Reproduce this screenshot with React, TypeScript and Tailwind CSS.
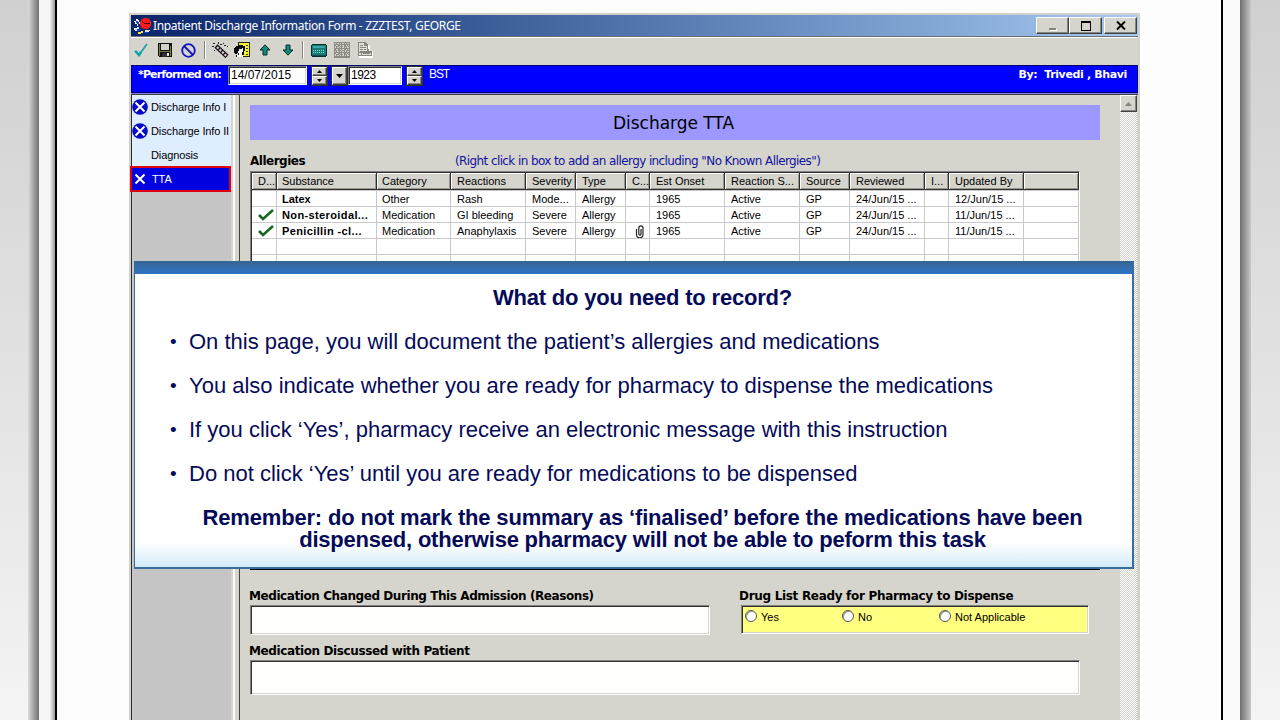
import React from 'react';
import clsx from 'clsx';

interface Column {
  label: string;
  width: string;
  pad: string;
}

interface AllergyRow {
  checked: boolean;
  clip: boolean;
  cells: string[];
}

const columns: Column[] = [
  { label: 'D...', width: 'w-[25px]', pad: 'pl-[6px]' },
  { label: 'Substance', width: 'w-[100px]', pad: 'pl-[5px]' },
  { label: 'Category', width: 'w-[74px]', pad: 'pl-[5px]' },
  { label: 'Reactions', width: 'w-[75px]', pad: 'pl-[6px]' },
  { label: 'Severity', width: 'w-[50px]', pad: 'pl-[6px]' },
  { label: 'Type', width: 'w-[50px]', pad: 'pl-[6px]' },
  { label: 'C...', width: 'w-[24px]', pad: 'pl-[6px]' },
  { label: 'Est Onset', width: 'w-[75px]', pad: 'pl-[6px]' },
  { label: 'Reaction S...', width: 'w-[75px]', pad: 'pl-[6px]' },
  { label: 'Source', width: 'w-[50px]', pad: 'pl-[6px]' },
  { label: 'Reviewed', width: 'w-[75px]', pad: 'pl-[6px]' },
  { label: 'I...', width: 'w-[24px]', pad: 'pl-[6px]' },
  { label: 'Updated By', width: 'w-[75px]', pad: 'pl-[6px]' },
  { label: '', width: 'w-[55px]', pad: '' },
];

const rows: AllergyRow[] = [
  { checked: false, clip: false, cells: ['', 'Latex', 'Other', 'Rash', 'Mode...', 'Allergy', '', '1965', 'Active', 'GP', '24/Jun/15 ...', '', '12/Jun/15 ...', ''] },
  { checked: true, clip: false, cells: ['', 'Non-steroidal...', 'Medication', 'GI bleeding', 'Severe', 'Allergy', '', '1965', 'Active', 'GP', '24/Jun/15 ...', '', '11/Jun/15 ...', ''] },
  { checked: true, clip: true, cells: ['', 'Penicillin -cl...', 'Medication', 'Anaphylaxis', 'Severe', 'Allergy', '', '1965', 'Active', 'GP', '24/Jun/15 ...', '', '11/Jun/15 ...', ''] },
  { checked: false, clip: false, cells: Array(14).fill('') },
  { checked: false, clip: false, cells: Array(14).fill('') },
];

const bullets = [
  'On this page, you will document the patient’s allergies and medications',
  'You also indicate whether you are ready for pharmacy to dispense the medications',
  'If you click ‘Yes’, pharmacy receive an electronic message with this instruction',
  'Do not click ‘Yes’ until you are ready for medications to be dispensed',
];

const raised = 'bg-[#d6d5cd] border border-t-white border-l-white border-r-[#404040] border-b-[#404040] shadow-[inset_-1px_-1px_0_#86867f]';
const sunken = 'border border-t-[#808080] border-l-[#808080] border-r-white border-b-white shadow-[inset_1px_1px_0_#303030,inset_-1px_-1px_0_#d6d5cd]';

const AppIcon = () => (
  <svg width="20" height="20" viewBox="0 0 20 20" shapeRendering="crispEdges">
    <path d="M3 3h2v1h1v2h1v2H5v2H4V8H2V6H1V5h2z" fill="#f4f4f4" />
    <path d="M3 5h2v1h1v2H4V7H3z" fill="#1540d8" />
    <path d="M1 12h3v-1h2v2H4v2H2v-1H1z" fill="#d8e4ff" />
    <path d="M4 13h3v2H4z" fill="#1540d8" />
    <path d="M5 16h3v-1h2v2H8v1H5z" fill="#f0e24a" />
    <circle cx="12.500" cy="7.500" r="5.700" fill="#ee1c1c" shapeRendering="auto" />
    <path d="M9 5l3 3 5-1" stroke="#5a0000" fill="none" />
    <path d="M12 14h5v1h-1v1h-4z" fill="#dcdcdc" />
    <path d="M11 16h4v1h-4z" fill="#1540d8" />
  </svg>
);

const TickIcon = () => (
  <svg width="14" height="14" viewBox="0 0 14 14">
    <path d="M1 8l4 4L13 1" stroke="#0aa3a6" strokeWidth="1.6" fill="none" />
    <path d="M1.500 8l3.500 4 2-3" stroke="#0aa3a6" strokeWidth="2.400" fill="none" />
  </svg>
);

const SaveIcon = () => (
  <svg width="14" height="14" viewBox="0 0 14 14" shapeRendering="crispEdges">
    <path d="M0 0h14v14H1l-1-1z" fill="#101010" />
    <path d="M1 1h1v12H1z" fill="#7d7d45" />
    <path d="M12 3h1v10h-1z" fill="#7d7d45" />
    <path d="M3 1h8v6H3z" fill="#d2d2ca" />
    <path d="M2 8h10v1H2z" fill="#7d7d45" />
    <path d="M4 10h5v4H4z" fill="#303030" />
    <path d="M9 10h2v3H9z" fill="#e6e6e0" />
  </svg>
);

const CancelIcon = () => (
  <svg width="15" height="15" viewBox="0 0 15 15">
    <circle cx="7.500" cy="7.500" r="6.300" stroke="#1212c4" strokeWidth="1.800" fill="none" />
    <path d="M3 3l9 9" stroke="#1212c4" strokeWidth="1.800" />
  </svg>
);

const WandIcon = () => (
  <svg width="17" height="16" viewBox="0 0 17 16">
    <path d="M4 4l11 10.500" stroke="#151515" strokeWidth="4.500" />
    <path d="M5 5l9.500 9" stroke="#e2c0d6" strokeWidth="2.200" strokeDasharray="2.200 1.300" />
    <path
      d="M1 1h2v1H1zM0 4h2v1H0zM6 0h1v2H6zM8 2h2v1H8zM11 1h1v1h-1zM12 3h2v1h-2zM15 4h1v1h-1zM2 8h1v1H2z"
      fill="#222"
      shapeRendering="crispEdges"
    />
  </svg>
);

const PersonIcon = () => (
  <svg width="16" height="16" viewBox="0 0 16 16" shapeRendering="crispEdges">
    <path d="M4 0h12v15H4z" fill="#222" />
    <path d="M5 1h10v13H5z" fill="#f7ef2c" />
    <path d="M12 3h2v1h-2zM12 6h2v1h-2zM12 9h2v1h-2zM12 12h2v1h-2z" fill="#333" />
    <path d="M1 5h1V4h2V3h5v1h2v5h-1v2H9v2H5v-2H3v1H1v-1H0V6h1z" fill="#080808" />
    <path d="M5 7h3V6h1v4H8v3h1v2H3v-2h2v-2H4V9h1z" fill="#f2f2f2" />
    <path d="M2 13h1v2H2zM9 10h1v3H9z" fill="#111" />
  </svg>
);

const ArrowIcon = ({ down }: { down?: boolean }) => (
  <svg width="12" height="12" viewBox="0 0 12 12" className={down ? 'rotate-180' : ''}>
    <path d="M6 .8L11 6H8v5H4V6H1z" fill="#0d8a78" stroke="#0b2b28" strokeWidth="1" />
  </svg>
);

const CalcIcon = () => (
  <svg width="16" height="13" viewBox="0 0 16 13" shapeRendering="crispEdges">
    <path d="M1 0h14v1h1v11h-1v1H1v-1H0V1h1z" fill="#0c2b2c" />
    <path d="M1 1h14v10H1z" fill="#157a78" />
    <path d="M2 2h12v2H2z" fill="#39aaa5" />
    <path d="M2 6.500h12M2 8.500h12" stroke="#8fe0d8" strokeDasharray="1 1" />
    <path d="M1 11h14v1H1z" fill="#134e50" />
  </svg>
);

const GridIcon = () => (
  <svg width="16" height="16" viewBox="0 0 16 16" shapeRendering="crispEdges">
    <path d="M0 0h16v16H0z" fill="#8b8b84" />
    <path d="M1 1.500h14M1 5.500h14M1 9.500h14M1 13.500h14" stroke="#d3d3cc" strokeDasharray="1 1 2 1" />
    <path d="M2 3.500h13M2 7.500h13M2 11.500h13" stroke="#d3d3cc" strokeDasharray="2 2 1 1" />
    <path d="M1 4.500h13M3 8.500h12M1 12.500h13" stroke="#d3d3cc" strokeDasharray="1 3" />
  </svg>
);

const DocIcon = () => (
  <svg width="16" height="16" viewBox="0 0 16 16" shapeRendering="crispEdges">
    <path d="M2 1h8l3 4v4h3v7H2z" fill="#fff" />
    <path d="M1 0h7l3 3v4h1v2h3v5H1z" fill="#85857e" />
    <path d="M2 1h5v3h3v5H5v1H2z" fill="#e0e0da" />
    <path d="M5 11h9v2H5zM2 11h2v2H2z" fill="#e0e0da" />
    <path d="M3 3h3v1H3zM3 5h6v1H3zM3 7h3v1H3zM7 7h2v1H7zM3 9h2v1H3zM6 11h7v1H6z" fill="#85857e" />
  </svg>
);

const CrossIcon = ({ disc }: { disc?: boolean }) => (
  <svg width="16" height="16" viewBox="0 0 16 16">
    {disc && <circle cx="8" cy="8" r="7.800" fill="#0808c8" />}
    <path d="M3.500 3.500l9 9M12.500 3.500l-9 9" stroke="#fff" strokeWidth="2" />
  </svg>
);

const GreenCheck = () => (
  <svg width="16" height="12" viewBox="0 0 16 12">
    <path d="M1 6l4 4L15 1" stroke="#17691f" strokeWidth="2.600" fill="none" />
  </svg>
);

const ClipIcon = () => (
  <svg width="10" height="13" viewBox="0 0 10 13">
    <path d="M1.500 4v5.500a3 3 0 0 0 6.500 0V3a2 2 0 0 0-4.200 0v6a1 1 0 0 0 2.200 0V4" stroke="#222" strokeWidth="1.200" fill="none" />
  </svg>
);

const Spinner = () => (
  <div className="flex h-5 w-[17px] flex-col bg-[#303030] p-px">
    {[false, true].map((down) => (
      <div key={String(down)} className={clsx('flex flex-1 items-center justify-center', raised)}>
        <svg width="5" height="3" viewBox="0 0 5 3" className={down ? 'rotate-180' : ''}>
          <path d="M2.500 0L5 3H0z" fill="#000" />
        </svg>
      </div>
    ))}
  </div>
);

const TitleBar = () => (
  <div className="flex h-[21px] shrink-0 items-center bg-linear-to-r from-[#0a246a] to-[#a6caf0] pr-px pl-[2px]">
    <AppIcon />
    <span className="font-['Noto_Sans'] text-[12px] leading-[16px] tracking-[-0.33px] whitespace-nowrap text-white">
      Inpatient Discharge Information Form - ZZZTEST, GEORGE
    </span>
    <div className="ml-auto flex">
      <div className={clsx('flex h-[17px] w-[33px] items-end justify-center pb-[3px]', raised)}>
        <div className="h-[2px] w-[7px] bg-[#85857e] shadow-[1px_1px_0_#fff]" />
      </div>
      <div className={clsx('flex h-[17px] w-[33px] items-center justify-center', raised)}>
        <div className="h-[10px] w-[10px] border border-t-2 border-black" />
      </div>
      <div className={clsx('ml-[2px] flex h-[17px] w-[33px] items-center justify-center', raised)}>
        <svg width="10" height="9" viewBox="0 0 10 9">
          <path d="M1 .5l8 8M9 .5l-8 8" stroke="#000" strokeWidth="2" />
        </svg>
      </div>
    </div>
  </div>
);

const Toolbar = () => (
  <div className="flex h-[27px] shrink-0 items-center bg-[#d6d5cd] pb-[3px] pl-[3px]">
    <TickIcon />
    <div className="ml-[10px]"><SaveIcon /></div>
    <div className="ml-[9px]"><CancelIcon /></div>
    <div className="ml-[8px] h-[18px] w-[2px] border-r border-l border-r-white border-l-[#85857e]" />
    <div className="ml-[6px]"><WandIcon /></div>
    <div className="ml-[5px]"><PersonIcon /></div>
    <div className="ml-[9px]"><ArrowIcon /></div>
    <div className="ml-[11px]"><ArrowIcon down /></div>
    <div className="ml-[8px] h-[18px] w-[2px] border-r border-l border-r-white border-l-[#85857e]" />
    <div className="ml-[7px]"><CalcIcon /></div>
    <div className="ml-[7px]"><GridIcon /></div>
    <div className="ml-[7px]"><DocIcon /></div>
  </div>
);

const PerformedBar = () => (
  <div className="flex h-[28px] shrink-0 items-start border border-[#000070] bg-[#0000ff] text-white">
    <span className="ml-[6px] w-[90px] pt-[2px] font-['DejaVu_Sans'] text-[11px] leading-[14px] font-bold tracking-[-0.85px] whitespace-nowrap">
      *Performed on:
    </span>
    <div className={clsx('h-[19px] w-[79px] bg-white pl-[2px] text-[12px] leading-[17px] text-black', sunken)}>14/07/2015</div>
    <div className="ml-[4px]"><Spinner /></div>
    <div className="ml-[3px] h-5 w-[17px] bg-[#303030] p-px">
      <div className={clsx('flex h-full items-center justify-center', raised)}>
        <svg width="7" height="4" viewBox="0 0 7 4"><path d="M0 0h7L3.500 4z" fill="#000" /></svg>
      </div>
    </div>
    <div className={clsx('h-[19px] w-[54px] bg-white pl-[2px] text-[12px] leading-[17px] tracking-[-0.5px] text-black', sunken)}>1923</div>
    <div className="ml-[4px]"><Spinner /></div>
    <span className="ml-[6px] pt-px text-[12px] leading-[15px] tracking-[-1.1px]">BST</span>
    <span className="mr-[10px] ml-auto pt-[2px] font-['DejaVu_Sans'] text-[11px] leading-[14px] font-bold tracking-[-0.36px] whitespace-pre">
      By:  Trivedi , Bhavi
    </span>
  </div>
);

const Sidebar = () => (
  <div className="w-[100px] shrink-0 border-l border-[#303030] bg-[#c5c5c5] text-[11px] tracking-[-0.12px]">
    <div className="bg-[#dfeeff]">
      {['Discharge Info I', 'Discharge Info II', 'Diagnosis'].map((item, i) => (
        <div key={item} className="flex h-6 items-center">
          <div className="w-[19px] shrink-0">{i < 2 && <CrossIcon disc />}</div>
          <span className="whitespace-nowrap">{item}</span>
        </div>
      ))}
    </div>
    <div className="-mt-px -ml-[2px] flex h-[26px] w-[101px] items-center border-2 border-[#e00010] bg-[#0000e0] text-white">
      <CrossIcon />
      <span className="ml-[4px]">TTA</span>
    </div>
  </div>
);

const AllergyTable = () => (
  <div className={clsx('h-[120px] w-[830px] overflow-hidden bg-white pt-px pl-px text-[11px]', sunken)}>
    <div className="flex h-[17px] border-b border-[#303030] bg-[#d6d5cd] leading-[17px]">
      {columns.map((col, i) => (
        <div key={i} className={clsx('shrink-0 overflow-hidden border-r border-r-[#303030] whitespace-nowrap shadow-[inset_1px_1px_0_#fff,inset_-1px_-1px_0_#98988f]', col.width, col.pad)}>
          {col.label}
        </div>
      ))}
    </div>
    <div className="h-px border-b border-[#c9c9c9]" />
    {rows.map((row, r) => (
      <div key={r} className="flex h-4 border-b border-[#c9c9c9] leading-[15px]">
        {row.cells.map((cell, i) => (
          <div
            key={i}
            className={clsx('flex shrink-0 items-center border-r border-[#c9c9c9] pt-px whitespace-nowrap', columns[i].width, columns[i].pad, i === 1 && 'font-bold', i === 1 && r > 0 && 'tracking-[0.38px]')}
          >
            {i === 0 && row.checked && <GreenCheck />}
            {i === 6 && row.clip ? <div className="ml-[3px]"><ClipIcon /></div> : cell}
          </div>
        ))}
      </div>
    ))}
  </div>
);

const labelFont = "font-['DejaVu_Sans'] text-[12px] font-bold leading-[18px] whitespace-nowrap text-black";

const FormBody = () => (
  <div className="flex w-[880px] shrink-0 flex-col bg-[#d6d5cd] pl-[10px]">
    <div className="mt-[10px] flex h-[35px] w-[850px] items-center justify-center bg-[#9c98ff] font-['DejaVu_Sans'] text-[17px] text-black">
      <span className="pt-[2px] pr-[3px] tracking-[-0.02px]">Discharge TTA</span>
    </div>
    <div className="mt-[12px] flex h-[19px]">
      <span className={clsx(labelFont, 'w-[205px] tracking-[-0.5px]')}>Allergies</span>
      <span className="font-['DejaVu_Sans'] text-[12px] leading-[18px] tracking-[-0.6px] whitespace-nowrap text-[#1111a0]">
        (Right click in box to add an allergy including "No Known Allergies")
      </span>
    </div>
    <AllergyTable />
    <div className="mt-[278px] w-[850px] border-b border-black" />
    <div className="mt-[17px] flex">
      <div className="w-[490px]">
        <div className={clsx(labelFont, '-ml-px h-[18px] tracking-[-0.42px]')}>Medication Changed During This Admission (Reasons)</div>
        <div className={clsx('h-[30px] w-[460px] bg-[#fefefa]', sunken)} />
      </div>
      <div>
        <div className={clsx(labelFont, '-ml-px h-[18px] tracking-[-0.31px]')}>Drug List Ready for Pharmacy to Dispense</div>
        <div className={clsx('ml-px flex h-[29px] w-[348px] bg-[#ffff80] pt-[4px] pl-[3px] text-[11px] leading-[14px]', sunken)}>
          {['Yes', 'No', 'Not Applicable'].map((option) => (
            <div key={option} className="flex w-[97px] shrink-0 whitespace-nowrap">
              <div className="mr-[4px] h-[12px] w-[12px] rounded-full border border-[#555] bg-white shadow-[inset_1px_1px_0_#999]" />
              {option}
            </div>
          ))}
        </div>
      </div>
    </div>
    <div className={clsx(labelFont, 'mt-[7px] -ml-px h-[18px] tracking-[-0.39px]')}>Medication Discussed with Patient</div>
    <div className={clsx('h-[35px] w-[830px] bg-[#fefefa]', sunken)} />
  </div>
);

const Callout = () => (
  <div className="absolute top-[261px] left-[134px] flex h-[308px] w-[1000px] flex-col border-r-2 border-b-2 border-l border-[#3a6d9f] bg-linear-to-b from-white from-92% to-[#d3ebfa] text-[22px] leading-[22px] text-[#050b58]">
    <div className="h-[13px] shrink-0 bg-linear-to-b from-[#35658f] to-[#2f74c8]" />
    <div className="mt-[13px] pl-[18px] text-center font-bold tracking-[-0.19px]">What do you need to record?</div>
    <ul>
      {bullets.map((line) => (
        <li key={line} className="mt-[22px] flex whitespace-nowrap">
          <span className="w-[54px] shrink-0 pl-[35px] text-[19px]">•</span>
          {line}
        </li>
      ))}
    </ul>
    <div className="mt-[22px] pl-[18px] text-center font-bold whitespace-nowrap">
      <p className="tracking-[-0.17px]">Remember: do not mark the summary as ‘finalised’ before the medications have been</p>
      <p className="tracking-[-0.21px]">dispensed, otherwise pharmacy will not be able to peform this task</p>
    </div>
  </div>
);

const App = () => {
  return (
    <div className="relative flex h-[720px] w-[1280px] overflow-hidden bg-[#fdfdfd] font-['Liberation_Sans',sans-serif] text-black">
      {/* Left page edge */}
      <div className="w-[28px] shrink-0 bg-linear-to-b from-[#d0d0d0] to-[#f4f4f4]" />
      <div className="w-[11px] shrink-0 bg-linear-to-r from-[#dcdcdc] to-[#707070]" />
      <div className="w-[11px] shrink-0 bg-[#f6f6f6]" />
      <div className="w-[5px] shrink-0 bg-linear-to-r from-[#f0f0f0] to-[#999]" />
      <div className="w-[2px] shrink-0 bg-black" />
      <div className="w-[72px] shrink-0" />

      {/* Application window */}
      <div className="mt-[13px] flex h-[707px] w-[1011px] shrink-0 flex-col border-t-2 border-r-2 border-l-2 border-[#d0d0cc] bg-[#d6d5cd]">
        <TitleBar />
        <div className="h-[2px] shrink-0 border-t border-b border-t-[#707070] border-b-white" />
        <Toolbar />
        <PerformedBar />
        <div className="h-[2px] shrink-0 border-b border-b-[#404040] bg-[#8080e0]" />
        <div className="flex min-h-0 flex-1">
          <Sidebar />
          <div className="w-[9px] shrink-0 border-r border-r-[#404040] pl-px">
            <div className="h-full w-[3px] border-r-2 border-white" />
          </div>
          <FormBody />
          <div className="w-[17px] shrink-0 bg-[repeating-conic-gradient(#fff_0_25%,#d2d2cd_0_50%)] bg-size-[2px_2px]">
            <div className={clsx('flex h-[17px] items-center justify-center', raised)}>
              <svg width="7" height="4" viewBox="0 0 7 4"><path d="M3.500 0L7 4H0z" fill="#85857e" /></svg>
            </div>
          </div>
        </div>
      </div>

      {/* Right page edge */}
      <div className="w-[81px] shrink-0" />
      <div className="w-[2px] shrink-0 bg-black" />
      <div className="w-[17px] shrink-0 bg-[#fafafa]" />
      <div className="w-[11px] shrink-0 bg-linear-to-r from-[#707070] to-[#c8c8c8]" />
      <div className="flex-1 bg-linear-to-b from-[#d0d0d0] to-[#f4f4f4]" />

      <Callout />
    </div>
  );
};

export default App;
